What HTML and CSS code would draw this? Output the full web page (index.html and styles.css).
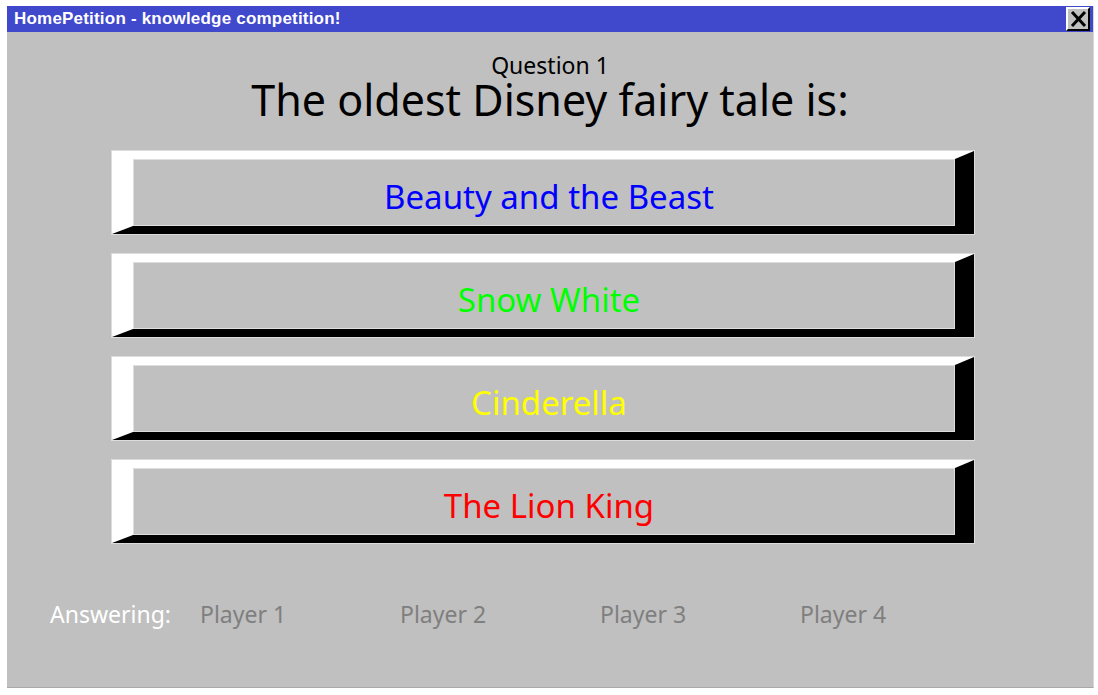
FILE: index.html
```html
<!DOCTYPE html>
<html>
<head>
<meta charset="utf-8">
<link rel="stylesheet" href="styles.css">
</head>
<body>
<div class="window">
  <div class="titlebar">
    <span class="title">HomePetition - knowledge competition!</span>
    <div class="close">
      <svg width="19" height="18" viewBox="0 0 19 18"><path d="M3 2 L16 16 M16 2 L3 16" stroke="#000" stroke-width="3" fill="none"/></svg>
    </div>
  </div>
  <div class="content">
    <div class="qnum">Question 1</div>
    <div class="question">The oldest Disney fairy tale is:</div>
    <div class="answers">
      <div class="answer"><div class="bevel"><div class="face blue">Beauty and the Beast</div></div></div>
      <div class="answer"><div class="bevel"><div class="face green">Snow White</div></div></div>
      <div class="answer"><div class="bevel"><div class="face yellow">Cinderella</div></div></div>
      <div class="answer"><div class="bevel"><div class="face red">The Lion King</div></div></div>
    </div>
    <div class="players">
      <span class="label">Answering:</span>
      <span class="player">Player 1</span>
      <span class="player">Player 2</span>
      <span class="player">Player 3</span>
      <span class="player">Player 4</span>
    </div>
  </div>
</div>
</body>
</html>
```
FILE: styles.css
```css
html, body {
  margin: 0;
  padding: 0;
  background: #ffffff;
}
body {
  font-family: "Noto Sans", "DejaVu Sans", sans-serif;
}
.window {
  margin: 6px 0 0 7px;
  width: 1087px;
  height: 682px;
  background: #c0c0c0;
  box-sizing: border-box;
  border-right: 1px solid #d8d8d8;
  border-bottom: 1px solid #a8a8a8;
  display: flex;
  flex-direction: column;
}
.titlebar {
  height: 26px;
  background: #4048cc;
  display: flex;
  align-items: flex-start;
  justify-content: space-between;
  padding-left: 7px;
}
.title {
  font-family: "Liberation Sans", Arial, sans-serif;
  font-weight: bold;
  font-size: 17px;
  letter-spacing: 0.2px;
  line-height: 26px;
  color: #ffffff;
}
.close {
  margin-top: 1px;
  margin-right: 3px;
  width: 24px;
  height: 24px;
  box-sizing: border-box;
  background: #c0c0c0;
  border-top: 2px solid #ffffff;
  border-left: 2px solid #ffffff;
  border-right: 2px solid #000000;
  border-bottom: 2px solid #000000;
  display: flex;
  align-items: center;
  justify-content: center;
}
.content {
  flex: 1;
  display: flex;
  flex-direction: column;
}
.qnum {
  margin-top: 22px;
  text-align: center;
  font-size: 23px;
  line-height: 22px;
  color: #000;
}
.question {
  margin-top: 2px;
  text-align: center;
  font-size: 43px;
  line-height: 44px;
  color: #000;
}
.answers {
  margin-top: 28px;
  margin-left: 104px;
  width: 864px;
  display: flex;
  flex-direction: column;
  gap: 18px;
}
.answer {
  height: 85px;
  box-sizing: border-box;
  border: 1px solid #dcdcdc;
}
.bevel {
  height: 100%;
  box-sizing: border-box;
  border-left: 21px solid #ffffff;
  border-top: 8px solid #ffffff;
  border-right: 19px solid #000000;
  border-bottom: 8px solid #000000;
}
.face {
  height: 100%;
  box-sizing: border-box;
  border: 1px solid #dedede;
  background: #c0c0c0;
  display: flex;
  align-items: center;
  justify-content: center;
  padding: 7px 0 0 10px;
  font-size: 33px;
}
.blue { color: #0000ff; }
.green { color: #00ff00; }
.yellow { color: #ffff00; }
.red { color: #ff0000; }
.players {
  margin-top: 55px;
  padding-left: 43px;
  display: flex;
  font-size: 23px;
  line-height: 30px;
}
.label {
  width: 150px;
  color: #ffffff;
}
.player {
  width: 200px;
  color: #7f7f7f;
}
```
